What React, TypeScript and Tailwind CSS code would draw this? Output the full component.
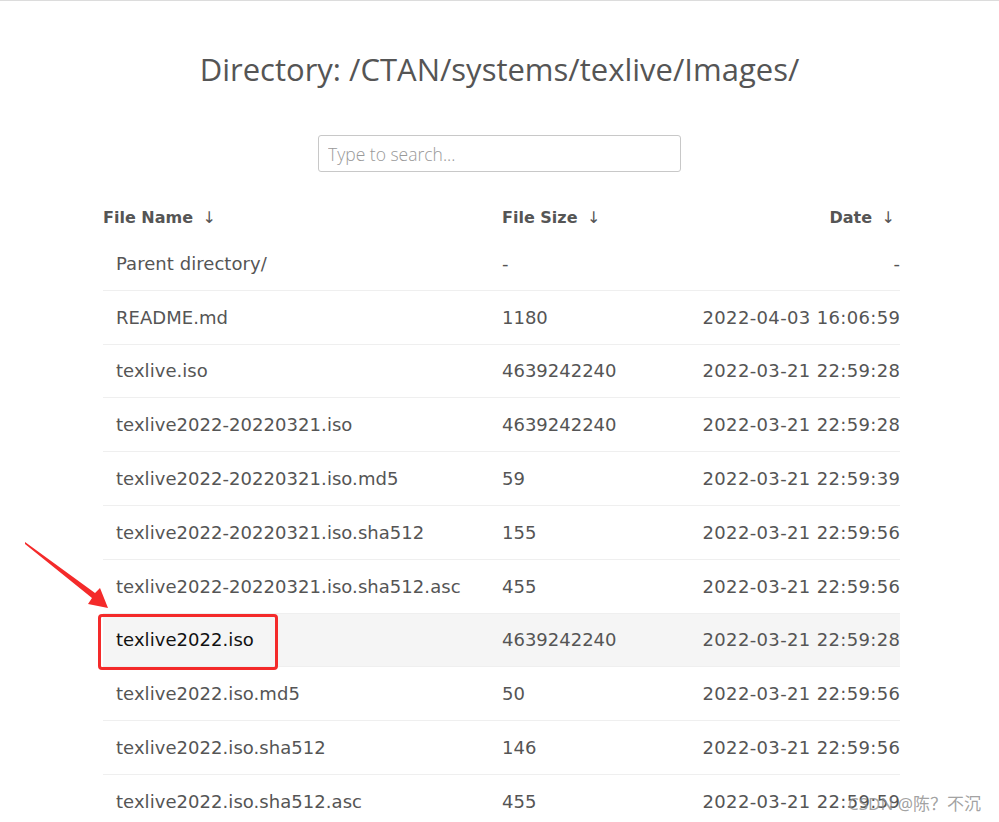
import React from "react";

const rows: { name: string; size: string; date: string; hl?: boolean }[] = [
  { name: "Parent directory/", size: "-", date: "-" },
  { name: "README.md", size: "1180", date: "2022-04-03 16:06:59" },
  { name: "texlive.iso", size: "4639242240", date: "2022-03-21 22:59:28" },
  { name: "texlive2022-20220321.iso", size: "4639242240", date: "2022-03-21 22:59:28" },
  { name: "texlive2022-20220321.iso.md5", size: "59", date: "2022-03-21 22:59:39" },
  { name: "texlive2022-20220321.iso.sha512", size: "155", date: "2022-03-21 22:59:56" },
  { name: "texlive2022-20220321.iso.sha512.asc", size: "455", date: "2022-03-21 22:59:56" },
  { name: "texlive2022.iso", size: "4639242240", date: "2022-03-21 22:59:28", hl: true },
  { name: "texlive2022.iso.md5", size: "50", date: "2022-03-21 22:59:56" },
  { name: "texlive2022.iso.sha512", size: "146", date: "2022-03-21 22:59:56" },
  { name: "texlive2022.iso.sha512.asc", size: "455", date: "2022-03-21 22:59:59" },
];

export default function App() {
  return (
    <div className="relative w-[999px] h-[822px] overflow-hidden bg-white border-t border-[#dcdcdc]">
      <h1
        className="text-center text-[31px] leading-[40px] text-[#555] font-normal pt-[48px]"
        style={{ fontFamily: '"Open Sans", "Noto Sans", sans-serif' }}
      >
        Directory: /CTAN/systems/texlive/Images/
      </h1>
      <div className="flex justify-center mt-[46px]">
        <input
          type="text"
          placeholder="Type to search..."
          className="w-[363px] h-[37px] border border-[#c8c8c8] rounded-[3px] px-[9px] text-[17.5px] text-[#555] placeholder:text-[#999] outline-none"
          style={{ fontFamily: '"Open Sans", "Noto Sans", sans-serif', fontWeight: 300 }}
        />
      </div>
      <div
        className="mx-[103px] w-[797px] mt-[27px] text-[#555]"
        style={{ fontFamily: '"DejaVu Sans", Verdana, sans-serif' }}
      >
        <div className="grid grid-cols-[399px_1fr_auto] h-[38px] items-center text-[16px] font-bold text-[#555]">
          <div>
            File Name <span className="font-normal ml-[4px]">↓</span>
          </div>
          <div>
            File Size <span className="font-normal ml-[4px]">↓</span>
          </div>
          <div className="pr-[5px]">
            Date <span className="font-normal ml-[4px]">↓</span>
          </div>
        </div>
        {rows.map((r, i) => (
          <div
            key={i}
            className={
              "grid grid-cols-[399px_1fr_auto] h-[53.8px] items-center text-[18px] border-b border-[#efefef] " +
              (r.hl ? "bg-[#f5f5f5]" : "")
            }
          >
            <div className={"pl-[13px] tracking-[0.05px] " + (r.hl ? "text-[#111]" : "")}>{r.name}</div>
            <div>{r.size}</div>
            <div className="text-right tracking-[0.35px] -mr-[0.35px]">{r.date}</div>
          </div>
        ))}
      </div>

      {/* annotation box */}
      <div className="absolute left-[98px] top-[613px] w-[180px] h-[56px] border-[3px] border-[#f42a2a] rounded-[4px]" />
      {/* arrow */}
      <svg className="absolute left-0 top-0" width="999" height="822" viewBox="0 0 999 822">
        <polygon
          points="25,541 95,592 100,587 108,607 88,603 92,597 25,543"
          fill="#f42a2a"
        />
      </svg>

      {/* watermark */}
      <div
        className="absolute left-[848px] top-[790px] text-[17px] leading-[26px] text-[#8a8a8a]/80"
        style={{ fontFamily: '"Noto Sans", "Noto Sans CJK SC", sans-serif' }}
      >
        CSDN @陈？不沉
      </div>
    </div>
  );
}
